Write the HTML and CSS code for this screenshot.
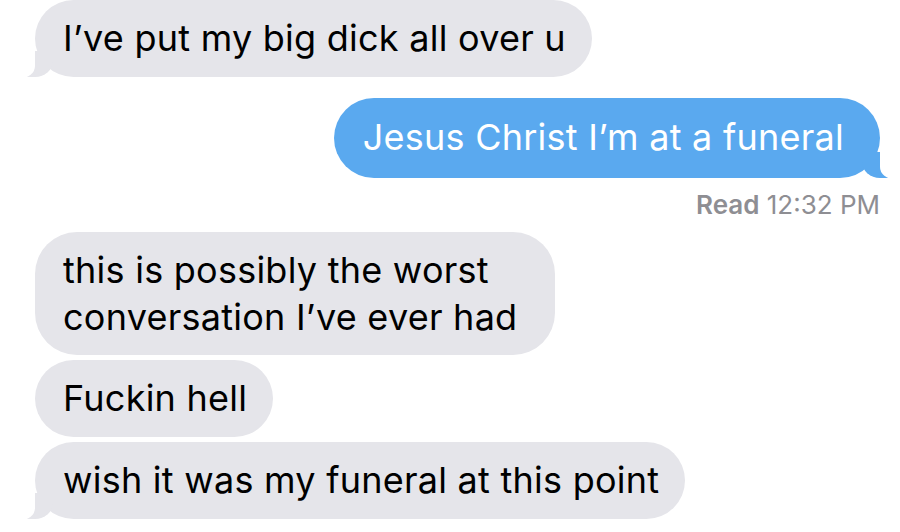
FILE: index.html
```html
<!DOCTYPE html>
<html lang="en">
<head>
    <meta charset="UTF-8">
    <meta name="viewport" content="width=device-width, initial-scale=1.0">
    <title>Messages</title>
    <link rel="stylesheet" href="styles.css">
</head>
<body>
    <div class="thread">
        <div class="row in">
            <div class="bubble gray tail">I’ve put my big dick all over u</div>
        </div>
        <div class="row out">
            <div class="bubble blue tail">Jesus Christ I’m at a funeral</div>
        </div>
        <div class="receipt"><b>Read</b> 12:32 PM</div>
        <div class="row in first">
            <div class="bubble gray two">this is possibly the worst<br>conversation I’ve ever had</div>
        </div>
        <div class="row in">
            <div class="bubble gray">Fuckin hell</div>
        </div>
        <div class="row in">
            <div class="bubble gray tail">wish it was my funeral at this point</div>
        </div>
    </div>
</body>
</html>
```

FILE: styles.css
```css
body{
    margin: 0;
    background: #ffffff;
    font-family: Inter, "Liberation Sans", Arial, sans-serif;
    color: #000;
}
.thread{
    display: flex;
    flex-direction: column;
    padding: 0 20px 0 35px;
    overflow: hidden;
}
.row{
    display: flex;
    margin-bottom: 5px;
}
.row.in{
    justify-content: flex-start;
}
.row.out{
    justify-content: flex-end;
    margin-top: 16px;
    margin-bottom: 0;
}
.row.first{
    margin-top: 0;
}
.bubble{
    position: relative;
    font-size: 36px;
    letter-spacing: 0.25px;
    line-height: 47px;
    padding: 15px 26px 15px 28px;
    border-radius: 39px;
    white-space: nowrap;
}
.bubble.gray{
    background: #e5e5ea;
}
.bubble.blue{
    background: #5aa9ef;
    color: #fff;
    padding: 16px 36px 17px 29px;
    border-radius: 40px;
}
.bubble.two{
    padding: 15px 38px 14px 28px;
    border-radius: 42px;
}
/* little tails */
.bubble.gray.tail::before{
    content: "";
    position: absolute;
    bottom: 0;
    left: -12px;
    width: 30px;
    height: 26px;
    background: #e5e5ea;
    border-bottom-right-radius: 18px 16px;
}
.bubble.gray.tail::after{
    content: "";
    position: absolute;
    bottom: -1px;
    left: -30px;
    width: 30px;
    height: 28px;
    background: #fff;
    border-bottom-right-radius: 14px 12px;
}
.bubble.blue.tail::before{
    content: "";
    position: absolute;
    bottom: 0;
    right: -12px;
    width: 30px;
    height: 26px;
    background: #5aa9ef;
    border-bottom-left-radius: 18px 16px;
}
.bubble.blue.tail::after{
    content: "";
    position: absolute;
    bottom: -1px;
    right: -30px;
    width: 30px;
    height: 28px;
    background: #fff;
    border-bottom-left-radius: 14px 12px;
}
.receipt{
    align-self: flex-end;
    color: #8e8e93;
    font-size: 26px;
    line-height: 30px;
    margin: 12px 0 12px;
}
.receipt b{
    font-weight: 600;
}
```
